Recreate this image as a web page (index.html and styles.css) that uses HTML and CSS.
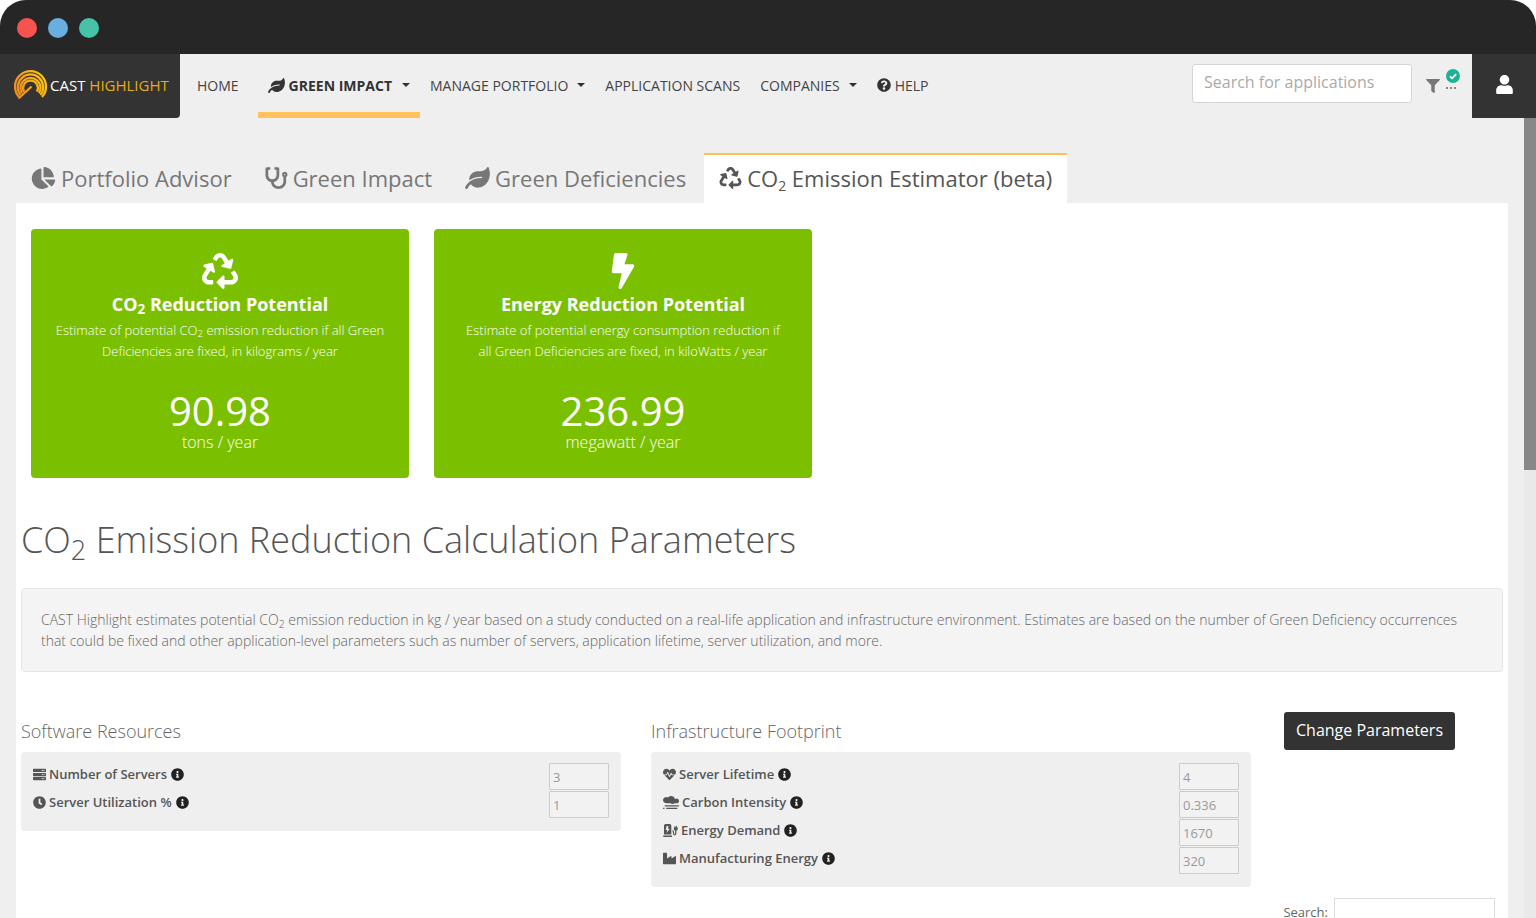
FILE: index.html
```
<!DOCTYPE html>
<html lang="en">
<head>
  <meta charset="UTF-8">
  <title>CAST Highlight - Green Impact</title>
  <link rel="stylesheet" href="styles.css">
</head>
<body>

  <!-- icons -->
  <svg class="sprite" aria-hidden="true">
    <symbol id="leaf" viewBox="0 0 576 512"><path d="M546.2 9.7c-5.6-12.5-21.6-13-28.3-1.2C486.9 62.4 431.4 96 368 96h-80C182 96 96 182 96 288c0 7 .8 13.7 1.5 20.5C161.3 262.8 253.4 224 384 224c8.8 0 16 7.2 16 16s-7.2 16-16 16C132.6 256 26 410.1 2.4 468c-6.6 16.3 1.2 34.9 17.5 41.6 16.4 6.8 35-1.1 41.8-17.3 1.5-3.6 20.9-47.9 71.9-90.6 32.4 43.9 94 85.8 174.9 77.2C465.5 467.5 576 326.7 576 154.3c0-50.2-10.8-102.2-29.8-144.6z"/></symbol>
    <symbol id="recycle" viewBox="0 0 512 512"><path d="M184.561 261.903c3.232 13.997-12.123 24.635-24.068 17.168l-40.736-25.455-50.867 81.402C55.606 356.273 70.96 384 96.012 384H148c6.627 0 12 5.373 12 12v40c0 6.627-5.373 12-12 12H96.115c-75.334 0-121.302-83.048-81.408-146.88l50.822-81.388-40.725-25.448c-12.081-7.547-8.966-25.961 4.879-29.158l110.237-25.45c8.611-1.988 17.201 3.381 19.189 11.99l25.452 110.237zm98.561-182.915l41.289 66.076-40.74 25.457c-12.051 7.528-9 25.953 4.879 29.158l110.237 25.45c8.672 1.999 17.215-3.438 19.189-11.99l25.45-110.237c3.197-13.844-11.99-24.719-24.068-17.168l-40.687 25.424-41.263-66.082c-37.521-60.033-125.209-60.171-162.816 0l-17.963 28.766c-3.51 5.62-1.8 13.021 3.82 16.533l33.919 21.195c5.62 3.512 13.024 1.803 16.536-3.817l17.961-28.743c12.712-20.341 41.973-19.676 54.257-.022zM497.288 301.12l-27.515-44.065c-3.511-5.623-10.916-7.334-16.538-3.821l-33.861 21.159c-5.62 3.512-7.33 10.915-3.818 16.536l27.564 44.112c13.257 21.211-2.057 48.96-27.136 48.96H320V336.02c0-14.213-17.242-21.383-27.313-11.313l-80 79.981c-6.249 6.248-6.249 16.379 0 22.627l80 79.989C302.689 517.308 320 510.3 320 495.989V448h95.88c75.274 0 121.335-82.997 81.408-146.88z"/></symbol>
    <symbol id="bolt" viewBox="0 0 320 512"><path d="M296 160H180.6l42.6-129.8C227.2 15 215.7 0 200 0H56C44 0 33.8 8.9 32.2 20.8l-32 240C-1.7 275.2 9.5 288 24 288h118.7L96.6 482.5c-3.6 15.2 8 29.5 23.3 29.5 8.4 0 16.4-4.4 20.8-12l176-304c9.3-15.9-2.2-36-20.7-36z"/></symbol>
    <symbol id="pie" viewBox="0 0 544 512"><path d="M527.79 288H290.5l158.03 158.03c6.04 6.04 15.98 6.53 22.19.68 38.7-36.46 65.32-85.61 73.13-140.86 1.34-9.46-6.51-17.85-16.06-17.85zm-15.83-64.8C503.72 103.74 408.26 8.28 288.8.04 279.68-.59 272 7.1 272 16.24V240h223.77c9.14 0 16.82-7.68 16.19-16.8zM224 288V50.71c0-9.55-8.39-17.4-17.84-16.06C86.99 51.49-4.1 155.6.14 280.37 4.5 408.51 114.83 513.59 243.03 511.98c50.4-.63 96.97-16.87 135.26-44.03 7.9-5.6 8.42-17.23 1.57-24.08L224 288z"/></symbol>
    <symbol id="stethoscope" viewBox="0 0 512 512"><path d="M447.1 112c-34.2.5-62.3 28.4-63 62.6-.5 24.3 12.5 45.6 32 56.8V344c0 57.3-50.2 104-112 104-60 0-109.2-44.1-111.9-99.2C265 333.8 320 269.2 320 192V36.6c0-11.4-8.1-21.3-19.3-23.5L237.8.5c-13-2.6-25.6 5.8-28.2 18.8L206.4 35c-2.6 13 5.8 25.6 18.8 28.2l30.7 6.1v121.4c0 52.9-42.2 96.7-95.1 97.2-53.4.5-96.9-42.7-96.9-96V69.4l30.7-6.1c13-2.6 21.4-15.2 18.8-28.2l-3.1-15.7C107.7 6.4 95.1-2 82.1.6L19.3 13C8.1 15.3 0 25.1 0 36.6V192c0 77.3 55.1 142 128.1 156.8C130.7 439.2 208.6 512 304 512c97 0 176-75.4 176-168V231.4c19.1-11.1 32-31.7 32-55.4 0-35.7-29.2-64.5-64.9-64zm.9 80c-8.8 0-16-7.2-16-16s7.2-16 16-16 16 7.2 16 16-7.2 16-16 16z"/></symbol>
    <symbol id="filter" viewBox="0 0 512 512"><path d="M487.976 0H24.028C2.71 0-8.047 25.866 7.058 40.971L192 225.941V432c0 7.831 3.821 15.17 10.237 19.662l80 55.98C298.02 518.69 320 507.493 320 487.98V225.941l184.947-184.97C520.021 25.896 509.338 0 487.976 0z"/></symbol>
    <symbol id="user" viewBox="0 0 448 512"><path d="M224 256c70.700 0 128-57.300 128-128S294.700 0 224 0 96 57.300 96 128s57.300 128 128 128zm89.600 20h-16.700c-22.200 10.200-46.900 16-72.900 16s-50.600-5.800-72.900-16h-16.700C60.200 276 0 336.200 0 410.400V476c0 20 16 36 36 36h376c20 0 36-16 36-36v-65.600c0-74.200-60.200-134.400-134.400-134.400z"/></symbol>
    <symbol id="question" viewBox="0 0 512 512"><path d="M504 256c0 136.997-111.043 248-248 248S8 392.997 8 256C8 119.083 119.043 8 256 8s248 111.083 248 248zM262.655 90c-54.497 0-89.255 22.957-116.549 63.758-3.536 5.286-2.353 12.415 2.715 16.258l34.699 26.31c5.205 3.947 12.621 3.008 16.665-2.122 17.864-22.658 30.113-35.797 57.303-35.797 20.429 0 45.698 13.148 45.698 32.958 0 14.976-12.363 22.667-32.534 33.976C247.128 238.528 216 254.941 216 296v4c0 6.627 5.373 12 12 12h56c6.627 0 12-5.373 12-12v-1.333c0-28.462 83.186-29.647 83.186-106.667 0-58.002-60.165-102-116.531-102zM256 338c-25.365 0-46 20.635-46 46 0 25.364 20.635 46 46 46s46-20.636 46-46c0-25.365-20.635-46-46-46z"/></symbol>
    <symbol id="info" viewBox="0 0 512 512"><path d="M256 8C119.043 8 8 119.083 8 256c0 136.997 111.043 248 248 248s248-111.003 248-248C504 119.083 392.957 8 256 8zm0 110c23.196 0 42 18.804 42 42s-18.804 42-42 42-42-18.804-42-42 18.804-42 42-42zm56 254c0 6.627-5.373 12-12 12h-88c-6.627 0-12-5.373-12-12v-24c0-6.627 5.373-12 12-12h12v-64h-12c-6.627 0-12-5.373-12-12v-24c0-6.627 5.373-12 12-12h64c6.627 0 12 5.373 12 12v100h12c6.627 0 12 5.373 12 12v24z"/></symbol>
    <symbol id="check" viewBox="0 0 16 16"><circle cx="8" cy="8" r="8"/><path d="M4.500 8.300l2.400 2.400 4.700-4.900" fill="none" stroke="#fff" stroke-width="2"/></symbol>
    <symbol id="server" viewBox="0 0 512 512"><path fill-rule="evenodd" d="M24 32h464q24 0 24 24v80q0 24-24 24H24q-24 0-24-24V56q0-24 24-24zm408 40a24 24 0 1 0 0 48 24 24 0 1 0 0-48zm-64 0a24 24 0 1 0 0 48 24 24 0 1 0 0-48zM24 192h464q24 0 24 24v80q0 24-24 24H24q-24 0-24-24v-80q0-24 24-24zm408 40a24 24 0 1 0 0 48 24 24 0 1 0 0-48zm-64 0a24 24 0 1 0 0 48 24 24 0 1 0 0-48zM24 352h464q24 0 24 24v80q0 24-24 24H24q-24 0-24-24v-80q0-24 24-24zm408 40a24 24 0 1 0 0 48 24 24 0 1 0 0-48zm-64 0a24 24 0 1 0 0 48 24 24 0 1 0 0-48z"/></symbol>
    <symbol id="clock" viewBox="0 0 512 512"><path d="M256 8C119 8 8 119 8 256s111 248 248 248 248-111 248-248S393 8 256 8zm57.100 350.100L224.900 294c-3.100-2.300-4.900-5.900-4.900-9.700V116c0-6.600 5.400-12 12-12h48c6.600 0 12 5.400 12 12v137.700l63.500 46.200c5.400 3.900 6.500 11.400 2.600 16.800l-28.200 38.800c-3.900 5.300-11.400 6.500-16.800 2.600z"/></symbol>
    <symbol id="heartbeat" viewBox="0 0 512 512"><path d="M320.200 243.800l-49.700 99.400c-6 12.100-23.400 11.700-28.900-.6l-56.900-126.300-30 71.700H60.600l182.500 186.500c7.100 7.300 18.600 7.300 25.700 0L451.400 288H342.300l-22.100-44.200zM473.700 73.900l-2.400-2.500c-51.500-52.600-135.800-52.600-187.400 0L256 100l-27.900-28.500c-51.500-52.700-135.900-52.700-187.400 0l-2.400 2.400C-10.400 123.700-12.500 203 31 256h102.400l35.900-86.200c5.400-12.900 23.600-13.100 29.300-.4l58.200 129.300 49-97.900c5.900-11.800 22.700-11.800 28.600 0l27.600 55.200H481c43.500-53 41.400-132.300-7.300-182.100z"/></symbol>
    <symbol id="smog" viewBox="0 0 640 512"><path d="M144 288h156c23 20 52 32 84 32s61-12 84-32h76c53 0 96-43 96-96s-43-96-96-96c-25 0-47 10-64 25C457 50 397 0 324 0c-47 0-89 22-116 57C189 42 167 32 144 32 64 32 0 90 0 160s64 128 144 128zM48 464H16q-16 0-16 16v16q0 16 16 16h32q16 0 16-16v-16q0-16-16-16zm576-96H80q-16 0-16 16v16q0 16 16 16h544q16 0 16-16v-16q0-16-16-16zm-64 96H144q-16 0-16 16v16q0 16 16 16h416q16 0 16-16v-16q0-16-16-16z"/></symbol>
    <symbol id="charging" viewBox="0 0 576 512"><path fill-rule="evenodd" d="M16 448h320q16 0 16 16v32q0 16-16 16H16q-16 0-16-16v-32q0-16 16-16zM96 0h160q64 0 64 64v352H32V64Q32 0 96 0zm40 80L96 232h64l-24 120 120-168h-72l24-104zM560 128h-16V80q0-16-16-16t-16 16v48h-32V80q0-16-16-16t-16 16v48h-16q-16 0-16 16v32q0 68 56 88v112q0 24-20 24t-20-24v-40q0-86-68-96v48q20 6 20 48v40q0 72 68 72t68-72V264q56-20 56-88v-32q0-16-16-16z"/></symbol>
    <symbol id="industry" viewBox="0 0 512 512"><path d="M475.115 163.781L336 252.309v-68.280c0-18.916-20.931-30.399-36.885-20.248L160 252.309V56c0-13.255-10.745-24-24-24H24C10.745 32 0 42.745 0 56v400c0 13.255 10.745 24 24 24h464c13.255 0 24-10.745 24-24V184.029c0-18.917-20.931-30.399-36.885-20.248z"/></symbol>
  </svg>

  <div class="window">
    <div class="titlebar">
      <span class="dot red"></span>
      <span class="dot blue"></span>
      <span class="dot green"></span>
    </div>

    <header class="navbar">
      <a class="brand" href="#">
        <svg class="logo" viewBox="0 0 34 32">
          <defs>
            <linearGradient id="gold" gradientUnits="userSpaceOnUse" x1="0" y1="24" x2="33" y2="10">
              <stop offset="0" stop-color="#ee8a22"/>
              <stop offset="1" stop-color="#fdc70c"/>
            </linearGradient>
          </defs>
          <g fill="none" stroke="url(#gold)" stroke-width="2.300">
            <path d="M5 28A15.500 15.500 0 1 1 28 28"/>
            <path d="M6.500 26A12.700 12.700 0 1 1 26.500 26"/>
            <path d="M8 24.200A10 10 0 1 1 25 24.200"/>
            <path d="M10 22.600A7.400 7.400 0 1 1 23 22.600"/>
            <path d="M4.500 29.500L17.500 17.500"/>
          </g>
        </svg>
        <span>CAST <b>HIGHLIGHT</b></span>
      </a>
      <nav class="menu">
        <a class="home" href="#">HOME</a>
        <a class="active" href="#"><svg class="leaf"><use href="#leaf"/></svg>GREEN IMPACT<i class="caret"></i></a>
        <a href="#">MANAGE PORTFOLIO<i class="caret"></i></a>
        <a href="#">APPLICATION SCANS</a>
        <a href="#">COMPANIES<i class="caret"></i></a>
        <a href="#"><svg class="help"><use href="#question"/></svg>HELP</a>
      </nav>
      <input class="app-search" type="text" placeholder="Search for applications" aria-label="Search for applications">
      <button class="filter" type="button" aria-label="Filter">
        <svg class="funnel"><use href="#filter"/></svg>
        <span class="filter-state"><svg class="ok"><use href="#check"/></svg><span class="more"></span></span>
      </button>
      <button class="user" type="button" aria-label="Account"><svg><use href="#user"/></svg></button>
    </header>

    <div class="body">
      <main>
        <nav class="tabs">
          <a href="#"><svg class="wide"><use href="#pie"/></svg>Portfolio Advisor</a>
          <a href="#"><svg><use href="#stethoscope"/></svg>Green Impact</a>
          <a href="#"><svg class="wide"><use href="#leaf"/></svg>Green Deficiencies</a>
          <a class="active" href="#"><svg><use href="#recycle"/></svg><span>CO<sub>2</sub> Emission Estimator (beta)</span></a>
        </nav>

        <div class="panel">
          <div class="cards">
            <div class="card">
              <svg><use href="#recycle"/></svg>
              <h3>CO<sub>2</sub> Reduction Potential</h3>
              <p>Estimate of potential CO<sub>2</sub> emission reduction if all Green Deficiencies are fixed, in kilograms / year</p>
              <div class="value">90.98</div>
              <div class="unit">tons / year</div>
            </div>
            <div class="card">
              <svg><use href="#bolt"/></svg>
              <h3>Energy Reduction Potential</h3>
              <p>Estimate of potential energy consumption reduction if all&nbsp;Green Deficiencies are fixed, in kiloWatts / year</p>
              <div class="value">236.99</div>
              <div class="unit">megawatt / year</div>
            </div>
          </div>

          <h1>CO<sub>2</sub> Emission Reduction Calculation Parameters</h1>

          <p class="well">CAST Highlight estimates potential CO<sub>2</sub> emission reduction in kg / year based on a study conducted on a real-life application and infrastructure environment. Estimates are based on the number of Green Deficiency occurrences that could be fixed and other application-level parameters such as number of servers, application lifetime, server utilization, and more.</p>

          <div class="params">
            <section>
              <h2>Software Resources</h2>
              <div class="group">
                <div class="row">
                  <label for="servers"><svg><use href="#server"/></svg>Number of Servers<svg class="info"><use href="#info"/></svg></label>
                  <input id="servers" type="text" value="3" disabled>
                </div>
                <div class="row">
                  <label for="utilization"><svg><use href="#clock"/></svg>Server Utilization %<svg class="info"><use href="#info"/></svg></label>
                  <input id="utilization" type="text" value="1" disabled>
                </div>
              </div>
            </section>
            <section>
              <h2>Infrastructure Footprint</h2>
              <div class="group">
                <div class="row">
                  <label for="lifetime"><svg><use href="#heartbeat"/></svg>Server Lifetime<svg class="info"><use href="#info"/></svg></label>
                  <input id="lifetime" type="text" value="4" disabled>
                </div>
                <div class="row">
                  <label for="carbon"><svg class="wide"><use href="#smog"/></svg>Carbon Intensity<svg class="info"><use href="#info"/></svg></label>
                  <input id="carbon" type="text" value="0.336" disabled>
                </div>
                <div class="row">
                  <label for="demand"><svg class="medium"><use href="#charging"/></svg>Energy Demand<svg class="info"><use href="#info"/></svg></label>
                  <input id="demand" type="text" value="1670" disabled>
                </div>
                <div class="row">
                  <label for="manufacturing"><svg><use href="#industry"/></svg>Manufacturing Energy<svg class="info"><use href="#info"/></svg></label>
                  <input id="manufacturing" type="text" value="320" disabled>
                </div>
              </div>
            </section>
            <button class="change" type="button">Change Parameters</button>
          </div>

          <div class="table-search">
            <label for="search">Search:</label>
            <input id="search" type="text">
          </div>
        </div>
      </main>
      <div class="scroll"><div class="thumb"></div></div>
    </div>
  </div>

</body>
</html>
```
FILE: styles.css
```
* {
  box-sizing: border-box;
}

body {
  margin: 0;
  background: #fff;
  color: #666;
  font-family: "Open Sans", "Noto Sans", sans-serif;
  font-size: 14px;
}

a {
  color: inherit;
  text-decoration: none;
}

button, input {
  font-family: inherit;
}

svg {
  fill: currentColor;
  flex: none;
}

sub {
  font-size: 75%;
  line-height: 0;
  position: relative;
  vertical-align: baseline;
  bottom: -0.25em;
}

.sprite {
  display: none;
}

.window {
  display: flex;
  flex-direction: column;
  height: 100vh;
  overflow: hidden;
  background: #efefef;
  border-radius: 26px 26px 0 0;
}

.titlebar {
  display: flex;
  flex: none;
  align-items: center;
  gap: 11px;
  height: 54px;
  padding: 2px 17px 0;
  background: #262626;
}

.dot {
  width: 20px;
  height: 20px;
  border-radius: 50%;
}

.red { background: #f7544f; }
.blue { background: #69aee0; }
.green { background: #47c1a8; }

/* navbar */

.navbar {
  display: flex;
  flex: none;
  height: 64px;
}

.brand {
  display: flex;
  align-items: center;
  gap: 2px;
  width: 180px;
  padding: 0 0 2px 14px;
  background: #333;
  border-bottom-right-radius: 4px;
  color: #fff;
  font-size: 15px;
  white-space: nowrap;
}

.brand b {
  color: #e5ac15;
  font-weight: 400;
}

.logo {
  width: 34px;
  height: 32px;
}

.menu {
  display: flex;
  flex: 1;
  padding-left: 7px;
}

.menu a {
  display: flex;
  align-items: center;
  padding: 4px 10px 0;
  border-bottom: 6px solid transparent;
  color: #444;
  white-space: nowrap;
}

.menu .home {
  margin-right: 9px;
}

.menu .active {
  border-color: #ffc25c;
  color: #333;
  font-weight: 700;
}

.menu .leaf {
  width: 17px;
  height: 15px;
  margin-right: 4px;
}

.menu .help {
  width: 14px;
  height: 14px;
  margin-right: 4px;
  color: #333;
}

.caret {
  margin-left: 9px;
  border-top: 4px solid #333;
  border-left: 4px solid transparent;
  border-right: 4px solid transparent;
}

.active .caret {
  margin-left: 10px;
}

.app-search {
  width: 220px;
  height: 39px;
  margin: 10px 14px 0 0;
  padding: 0 11px 4px;
  border: 1px solid #d5d5d5;
  border-radius: 3px;
  background: #fff;
  font-size: 16px;
}

.app-search::placeholder {
  color: #aaa;
}

.filter {
  display: flex;
  align-items: flex-start;
  gap: 6px;
  width: 46px;
  padding: 15px 0 0;
  border: 0;
  background: none;
  color: #777;
}

.funnel {
  width: 14px;
  height: 14px;
  margin-top: 10px;
}

.ok {
  display: block;
  width: 14px;
  height: 14px;
  color: #1ab394;
}

.more {
  display: block;
  width: 10px;
  margin-top: 4px;
  border-top: 2px dotted #888;
}

.user {
  display: flex;
  align-items: center;
  justify-content: center;
  width: 64px;
  padding: 0 0 4px;
  border: 0;
  background: #333;
  color: #fff;
}

.user svg {
  width: 17px;
  height: 19px;
}

/* page */

.body {
  display: flex;
  flex: 1;
  min-height: 0;
}

main {
  flex: 1;
  padding: 35px 16px 0;
  overflow: hidden;
}

.scroll {
  width: 12px;
  background: #e9e9e9;
}

.thumb {
  height: 44%;
  background: #888;
}

.tabs {
  display: flex;
  gap: 3px;
}

.tabs a {
  display: flex;
  align-items: center;
  height: 50px;
  padding: 0 15px 2px;
  border-top: 2px solid transparent;
  color: #777;
  font-size: 22px;
  white-space: nowrap;
}

.tabs svg {
  width: 23px;
  height: 22px;
  margin-right: 5px;
}

.tabs .wide {
  width: 25px;
}

.tabs sub {
  font-size: 14px;
}

.tabs .active {
  background: #fff;
  border-color: #fcbf5a;
  color: #555;
}

.panel {
  padding: 26px 5px 0;
  background: #fff;
}

.cards {
  display: flex;
  gap: 25px;
  padding-left: 10px;
}

.card {
  flex: 0 1 378px;
  padding: 24px;
  border-radius: 4px;
  background: #7bc000;
  color: #fff;
  text-align: center;
}

.card svg {
  display: block;
  width: 36px;
  height: 36px;
  margin: 0 auto;
}

.card h3 {
  margin: 0;
  font-size: 18px;
  line-height: 31px;
}

.card p {
  margin: 0 0 28px;
  font-size: 13px;
  font-weight: 300;
  line-height: 21px;
}

.value {
  font-size: 40px;
  line-height: 42px;
}

.unit {
  padding-bottom: 2px;
  font-size: 16px;
  font-weight: 300;
  line-height: 20px;
}

h1 {
  margin: 37px 0 23px;
  color: #555;
  font-size: 36px;
  font-weight: 300;
  line-height: 50px;
}

.well {
  margin: 0;
  padding: 20px 19px;
  border: 1px solid #e5e5e5;
  border-radius: 4px;
  background: #f4f4f4;
  font-weight: 300;
  line-height: 21px;
}

.params {
  display: grid;
  grid-template-columns: 600fr 600fr 222fr;
  gap: 30px;
  align-items: start;
  margin-top: 40px;
}

.params h2 {
  margin: 0 0 5px;
  font-size: 18px;
  font-weight: 300;
  line-height: 32px;
  padding-top: 3px;
}

.group {
  padding: 11px 12px 12px;
  border-radius: 4px;
  background: #efefef;
}

.row {
  display: flex;
  align-items: flex-start;
  justify-content: space-between;
  height: 28px;
}

.row label {
  display: flex;
  align-items: center;
  color: #555;
  font-size: 13px;
  font-weight: 600;
  line-height: 22px;
}

.row svg {
  width: 13px;
  height: 13px;
  margin-right: 3px;
}

.row .wide {
  width: 16px;
}

.row .medium {
  width: 15px;
}

.row .info {
  margin: 0 0 0 4px;
  color: #222;
}

.row input {
  width: 60px;
  height: 27px;
  padding: 0 3px;
  border: 1px solid #ccc;
  border-radius: 1px;
  background: #f2f2f2;
  color: #999;
  font-size: 13px;
}

.change {
  justify-self: start;
  height: 38px;
  margin-left: 3px;
  padding: 0 12px 2px;
  border: 0;
  border-radius: 3px;
  background: #333;
  color: #fff;
  font-size: 16px;
  white-space: nowrap;
}

.table-search {
  display: flex;
  justify-content: flex-end;
  gap: 6px;
  margin-top: 11px;
  padding-right: 8px;
}

.table-search label {
  font-size: 13px;
  line-height: 28px;
}

.table-search input {
  width: 161px;
  height: 30px;
  border: 1px solid #ddd;
  background: #fff;
}
```
